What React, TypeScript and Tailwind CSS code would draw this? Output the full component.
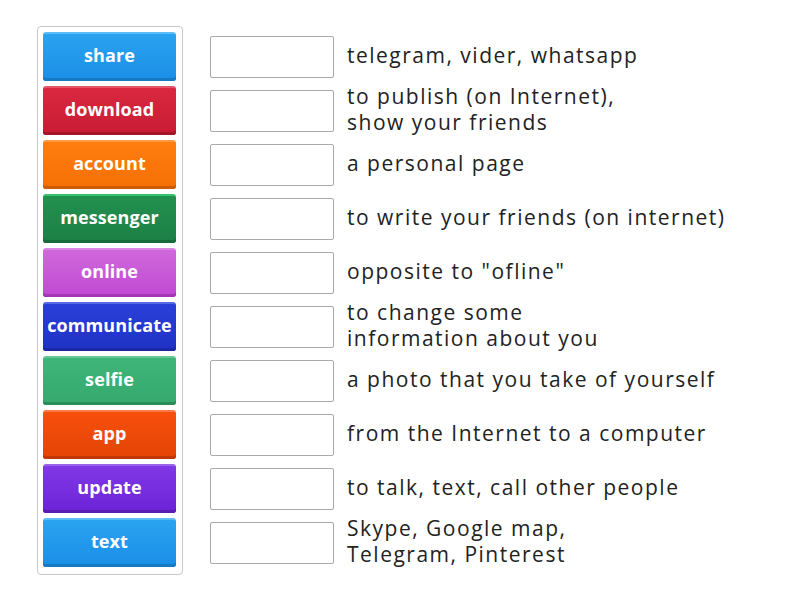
import React from "react";

const buttons: { label: string; cls: string }[] = [
  { label: "share", cls: "bg-gradient-to-b from-[#2aa3f0] to-[#1a8ee6] border-t-[#5cbcf7] shadow-[inset_0_-3px_0_#1579c4]" },
  { label: "download", cls: "bg-gradient-to-b from-[#d9283f] to-[#c81b33] border-t-[#e4556a] shadow-[inset_0_-3px_0_#a5152a]" },
  { label: "account", cls: "bg-gradient-to-b from-[#ff7d0f] to-[#f56f05] border-t-[#ff9a45] shadow-[inset_0_-3px_0_#cc5c04]" },
  { label: "messenger", cls: "bg-gradient-to-b from-[#22914f] to-[#1c7f45] border-t-[#36c46c] shadow-[inset_0_-3px_0_#176a3a]" },
  { label: "online", cls: "bg-gradient-to-b from-[#d068dc] to-[#c048d2] border-t-[#dc86e6] shadow-[inset_0_-3px_0_#a436b6]" },
  { label: "communicate", cls: "bg-gradient-to-b from-[#2a3fd8] to-[#1f32c4] border-t-[#5569e3] shadow-[inset_0_-3px_0_#1a29a3]" },
  { label: "selfie", cls: "bg-gradient-to-b from-[#3fb57a] to-[#35a96e] border-t-[#66c995] shadow-[inset_0_-3px_0_#2b8c5a]" },
  { label: "app", cls: "bg-gradient-to-b from-[#f74f0c] to-[#e44406] border-t-[#fa7a45] shadow-[inset_0_-3px_0_#bf3804]" },
  { label: "update", cls: "bg-gradient-to-b from-[#8038e6] to-[#6c22d6] border-t-[#9b63ec] shadow-[inset_0_-3px_0_#5a1ab4]" },
  { label: "text", cls: "bg-gradient-to-b from-[#2aa3f0] to-[#1a8ee6] border-t-[#5cbcf7] shadow-[inset_0_-3px_0_#1579c4]" },
];

const texts: string[][] = [
  ["telegram, vider, whatsapp"],
  ["to publish (on Internet),", "show your friends"],
  ["a personal page"],
  ["to write your friends (on internet)"],
  ['opposite to "ofline"'],
  ["to change some", "information about you"],
  ["a photo that you take of yourself"],
  ["from the Internet to a computer"],
  ["to talk, text, call other people"],
  ["Skype, Google map,", "Telegram, Pinterest"],
];

export default function App() {
  return (
    <div className="w-[800px] h-[600px] bg-white font-['Open_Sans',sans-serif] flex pt-[26px] pl-[37px]">
      <div className="w-[146px] h-[549px] border border-[#c8c8c8] rounded-[4px] pt-[5px] pl-[5px] flex flex-col gap-[5px]">
        {buttons.map((b) => (
          <div
            key={b.label}
            className={`w-[133px] h-[49px] rounded-[3px] border-t-2 flex items-center justify-center pb-[4px] text-white font-bold text-[18px] tracking-[0.1px] ${b.cls}`}
          >
            {b.label}
          </div>
        ))}
      </div>
      <div className="flex flex-col gap-[12px] pt-[10px] pl-[27px]">
        {texts.map((t, i) => (
          <div key={i} className="flex items-center h-[42px]">
            <div className="w-[124px] h-[42px] border border-[#aaaaaa] rounded-[2px] shrink-0" />
            <div className="pl-[13px] pb-[5px] text-[21px] leading-[26px] tracking-[1.5px] text-[#222222] whitespace-nowrap">
              {t.map((l, j) => (
                <div key={j}>{l}</div>
              ))}
            </div>
          </div>
        ))}
      </div>
    </div>
  );
}
